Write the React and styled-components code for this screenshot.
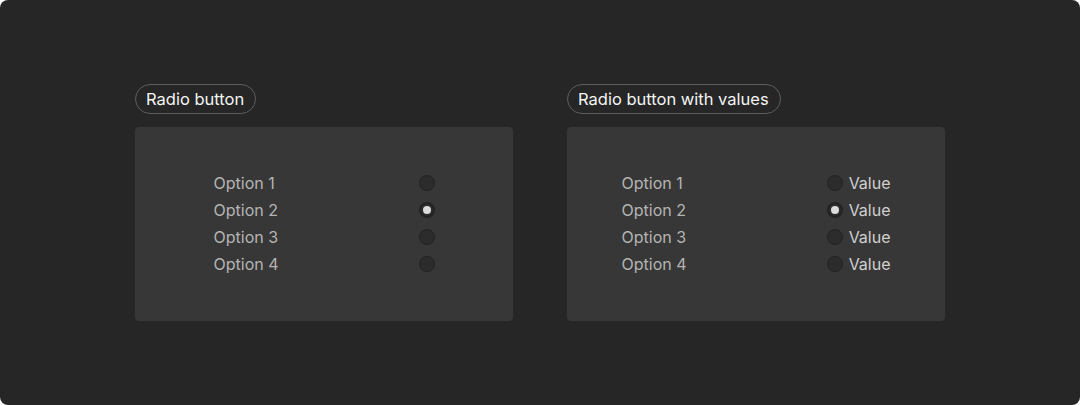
import styled, { createGlobalStyle } from "styled-components";

const GlobalStyle = createGlobalStyle`
  html, body {
    margin: 0;
    padding: 0;
    background: #ffffff;
  }
  body {
    font-family: "Inter", "Noto Sans", sans-serif;
  }
`;

const options = ["Option 1", "Option 2", "Option 3", "Option 4"];

export default function App() {
  return (
    <>
      <GlobalStyle />
      <Page>
        <Section>
          <Label>Radio button</Label>
          <Card>
            <List $width="221px">
              {options.map((opt, i) => (
                <Row key={opt}>
                  <OptionText>{opt}</OptionText>
                  <Radio $checked={i === 1} />
                </Row>
              ))}
            </List>
          </Card>
        </Section>
        <Section>
          <Label>Radio button with values</Label>
          <Card>
            <List $width="269px">
              {options.map((opt, i) => (
                <Row key={opt}>
                  <OptionText>{opt}</OptionText>
                  <ValueGroup>
                    <Radio $checked={i === 1} />
                    <ValueText>Value</ValueText>
                  </ValueGroup>
                </Row>
              ))}
            </List>
          </Card>
        </Section>
      </Page>
    </>
  );
}

const Page = styled.div`
  width: 1080px;
  height: 405px;
  box-sizing: border-box;
  background: #262626;
  border-radius: 8px;
  display: flex;
  justify-content: center;
  align-items: center;
  gap: 54px;
`;

const Section = styled.div`
  display: flex;
  flex-direction: column;
  align-items: flex-start;
  gap: 13px;
`;

const Label = styled.div`
  height: 30px;
  box-sizing: border-box;
  padding: 0 11px 1px 10px;
  border: 1px solid #5e5e5e;
  border-radius: 15px;
  display: flex;
  align-items: center;
  color: #f4f4f4;
  font-size: 16.5px;
`;

const Card = styled.div`
  width: 378px;
  height: 194px;
  box-sizing: border-box;
  padding-bottom: 2px;
  background: #373737;
  border-radius: 4px;
  display: flex;
  justify-content: center;
  align-items: center;
`;

const List = styled.div`
  width: ${(p) => p.$width};
  display: flex;
  flex-direction: column;
`;

const Row = styled.div`
  height: 27px;
  display: flex;
  align-items: center;
  justify-content: space-between;
`;

const OptionText = styled.span`
  color: #b4b4b4;
  font-size: 16px;
`;

const ValueGroup = styled.div`
  display: flex;
  align-items: center;
  gap: 6px;
`;

const ValueText = styled.span`
  color: #cfcfcf;
  font-size: 16px;
`;

const Radio = styled.span`
  width: 16px;
  height: 16px;
  box-sizing: border-box;
  border-radius: 50%;
  background: #2c2c2c;
  border: ${(p) => (p.$checked ? "2px" : "1px")} solid #222222;
  display: flex;
  align-items: center;
  justify-content: center;
  &::after {
    content: "";
    width: 8px;
    height: 8px;
    border-radius: 50%;
    background: #dcdcdc;
    display: ${(p) => (p.$checked ? "block" : "none")};
  }
`;
